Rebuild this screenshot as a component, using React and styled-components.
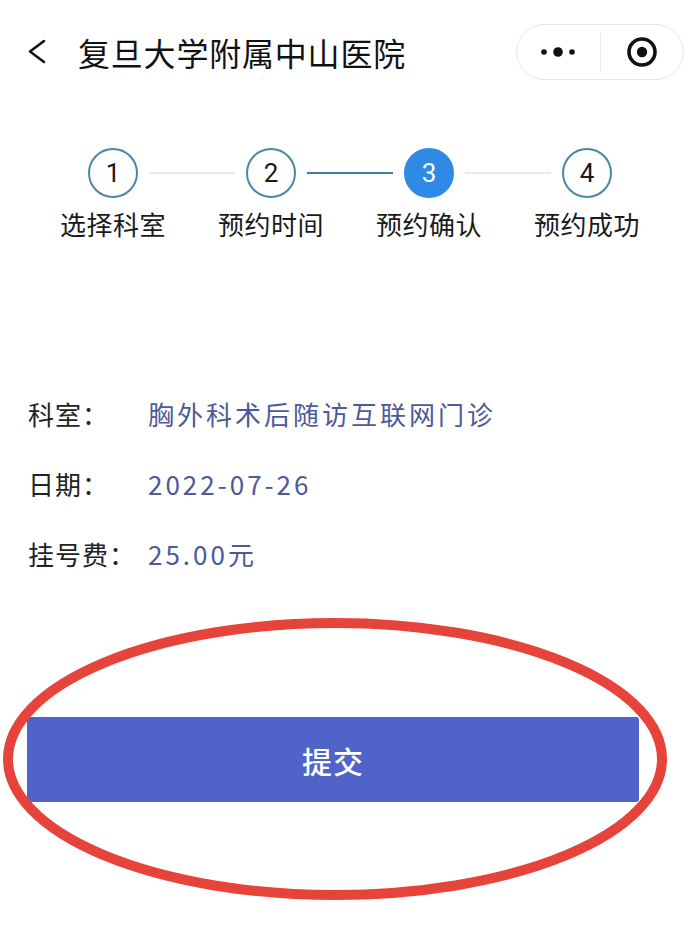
import React from "react";
import styled, { createGlobalStyle } from "styled-components";

const GlobalStyle = createGlobalStyle`
  html, body {
    margin: 0;
    padding: 0;
    background: #ffffff;
  }
  body {
    font-family: "Noto Sans CJK SC", "Noto Sans", sans-serif;
    color: #1a1a1a;
  }
`;

const Page = styled.div`
  position: relative;
  width: 700px;
  height: 940px;
  overflow: hidden;
  background: #ffffff;
  display: flex;
  flex-direction: column;
`;

const NavBar = styled.div`
  display: flex;
  align-items: center;
  height: 56px;
  margin-top: 24px;
  padding: 0 16px 0 27px;
`;

const BackButton = styled.div`
  width: 22px;
  height: 30px;
  display: flex;
  align-items: center;
`;

const Title = styled.div`
  margin-left: 29px;
  font-size: 32px;
  line-height: 56px;
  letter-spacing: 0.8px;
  color: #111;
  flex: 1;
`;

const Capsule = styled.div`
  width: 166px;
  height: 54px;
  border: 1px solid #e6e6e6;
  border-radius: 28px;
  display: flex;
  align-items: center;
  box-sizing: content-box;
`;

const CapsuleHalf = styled.div`
  flex: 1;
  height: 100%;
  display: flex;
  align-items: center;
  justify-content: center;
`;

const CapsuleDivider = styled.div`
  width: 1px;
  height: 38px;
  background: #ececec;
`;

const StepTrack = styled.div`
  display: flex;
  align-items: center;
  margin-top: 68px;
  padding-left: 88px;
`;

const StepCircle = styled.div`
  width: 50px;
  height: 50px;
  box-sizing: border-box;
  border-radius: 50%;
  border: 2px solid ${(p) => (p.$active ? "#2f8ae6" : "#4b86a4")};
  background: ${(p) => (p.$active ? "#2f8ae6" : "#ffffff")};
  color: ${(p) => (p.$active ? "#ffffff" : "#1a1a1a")};
  display: flex;
  align-items: center;
  justify-content: center;
  font-family: Roboto, "Noto Sans", sans-serif;
  font-size: 26px;
  line-height: 1;
`;

const Connector = styled.div`
  width: 86px;
  height: 2px;
  margin: 0 11px;
  background: ${(p) => (p.$done ? "#3f7e9d" : "#e7eaee")};
`;

const StepLabels = styled.div`
  display: grid;
  grid-template-columns: repeat(4, 158px);
  margin-top: 10px;
  padding-left: 34px;
`;

const StepLabel = styled.div`
  text-align: center;
  font-size: 26px;
  line-height: 31px;
  letter-spacing: 0.5px;
  color: #1a1a1a;
`;

const InfoList = styled.div`
  margin-top: 139px;
  padding-left: 28px;
  display: flex;
  flex-direction: column;
`;

const InfoRow = styled.div`
  display: flex;
  align-items: center;
  height: 70px;
`;

const InfoLabel = styled.div`
  width: 120px;
  font-size: 26px;
  letter-spacing: 1px;
  color: #222;
`;

const InfoValue = styled.div`
  font-size: 26px;
  letter-spacing: 3px;
  color: #4c5a9a;
`;

const SubmitButton = styled.button`
  margin: 129px 0 0 27px;
  width: 612px;
  height: 85px;
  border: none;
  border-radius: 3px;
  background: #4f63c8;
  color: #ffffff;
  font-family: "Noto Sans CJK SC", "Noto Sans", sans-serif;
  font-size: 30px;
  font-weight: 500;
  letter-spacing: 1px;
  cursor: pointer;
`;

const Annotation = styled.svg`
  position: absolute;
  left: 0;
  top: 0;
  pointer-events: none;
`;

const steps = ["选择科室", "预约时间", "预约确认", "预约成功"];
const current = 3;

const info = [
  { label: "科室：", value: "胸外科术后随访互联网门诊" },
  { label: "日期：", value: "2022-07-26" },
  { label: "挂号费：", value: "25.00元" },
];

export default function App() {
  return (
    <>
      <GlobalStyle />
      <Page>
        <NavBar>
          <BackButton>
            <svg width="20" height="26" viewBox="0 0 20 26">
              <polyline points="17,2 3,12.5 17,23" fill="none" stroke="#111" strokeWidth="2.6" strokeLinecap="round" strokeLinejoin="round" />
            </svg>
          </BackButton>
          <Title>复旦大学附属中山医院</Title>
          <Capsule>
            <CapsuleHalf>
              <svg width="40" height="12" viewBox="0 0 40 12">
                <circle cx="6" cy="6" r="2.8" fill="#111" />
                <circle cx="20" cy="6" r="4.8" fill="#111" />
                <circle cx="34" cy="6" r="2.8" fill="#111" />
              </svg>
            </CapsuleHalf>
            <CapsuleDivider />
            <CapsuleHalf>
              <svg width="34" height="34" viewBox="0 0 34 34">
                <circle cx="17" cy="17" r="13" fill="none" stroke="#111" strokeWidth="3.6" />
                <circle cx="17" cy="17" r="5.2" fill="#111" />
              </svg>
            </CapsuleHalf>
          </Capsule>
        </NavBar>

        <StepTrack>
          {steps.map((s, i) => (
            <React.Fragment key={s}>
              {i > 0 && <Connector $done={i + 1 === current} />}
              <StepCircle $active={i + 1 === current}>{i + 1}</StepCircle>
            </React.Fragment>
          ))}
        </StepTrack>
        <StepLabels>
          {steps.map((s) => (
            <StepLabel key={s}>{s}</StepLabel>
          ))}
        </StepLabels>

        <InfoList>
          {info.map((row) => (
            <InfoRow key={row.label}>
              <InfoLabel>{row.label}</InfoLabel>
              <InfoValue>{row.value}</InfoValue>
            </InfoRow>
          ))}
        </InfoList>

        <SubmitButton>提交</SubmitButton>

        <Annotation width="700" height="940" viewBox="0 0 700 940">
          <ellipse cx="335" cy="759" rx="327" ry="136" fill="none" stroke="#e6443a" strokeWidth="10" />
        </Annotation>
      </Page>
    </>
  );
}
